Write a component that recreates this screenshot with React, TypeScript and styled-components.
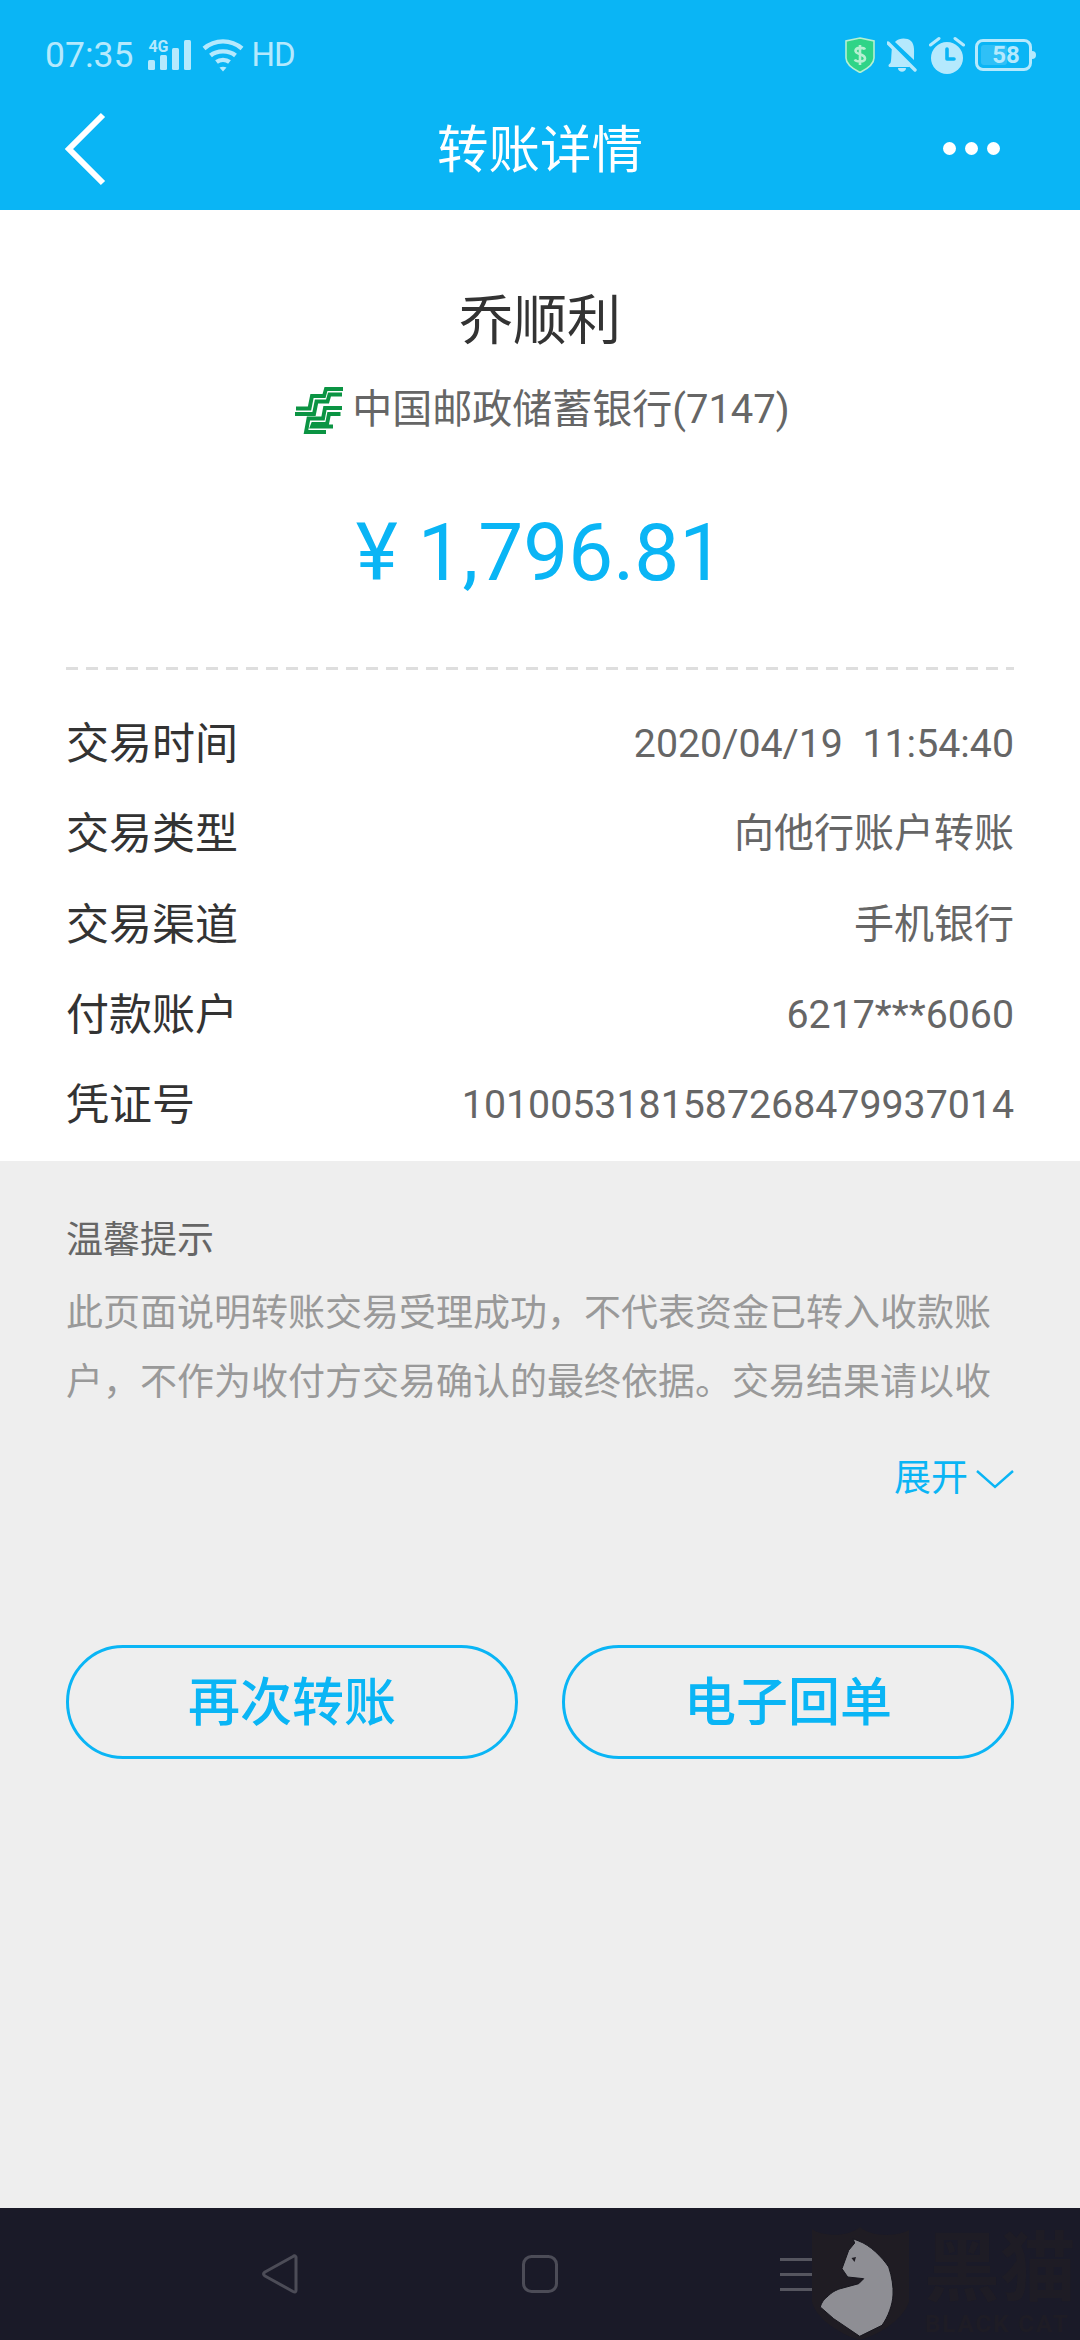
import React from "react";
import styled, { createGlobalStyle } from "styled-components";

const GlobalStyle = createGlobalStyle`
  html, body {
    margin: 0;
    padding: 0;
    background: #eeeeee;
  }
  * {
    box-sizing: border-box;
  }
  svg {
    display: block;
  }
`;

const FONT = `Roboto, "Noto Sans CJK SC", sans-serif`;
const BLUE = "#0ab5f5";
const STATUS = "#b5e9fd";

const Page = styled.div`
  position: relative;
  width: 1080px;
  height: 2340px;
  display: flex;
  flex-direction: column;
  overflow: hidden;
  font-family: ${FONT};
  background: #eeeeee;
`;

const Header = styled.header`
  background: ${BLUE};
  height: 210px;
  flex: none;
`;

const StatusBar = styled.div`
  height: 108px;
  padding: 2px 45px 0 45px;
  display: flex;
  align-items: center;
  justify-content: space-between;
  color: ${STATUS};
`;

const StatusGroup = styled.div`
  display: flex;
  align-items: center;
`;

const RightIcons = styled(StatusGroup)`
  gap: 12px;
`;

const StatusText = styled.span`
  font-size: 35.5px;
  line-height: 40px;
`;

const HdText = styled.span`
  font-size: 33px;
  line-height: 40px;
  letter-spacing: -1px;
  margin-left: 7px;
`;

const Signal = styled.div`
  position: relative;
  width: 44px;
  height: 30px;
  margin: 0 10px 0 15px;
`;

const SignalLabel = styled.span`
  position: absolute;
  left: 0;
  top: 0;
  font-size: 16px;
  line-height: 14px;
  font-weight: 700;
`;

const Battery = styled.div`
  position: relative;
  width: 57px;
  height: 32px;
  margin: 0 3px 0 -2px;
  border: 3px solid ${STATUS};
  border-radius: 8px;
  display: flex;
  align-items: center;
  justify-content: center;
  padding-left: 5px;
  color: ${STATUS};
  font-size: 24px;
  font-weight: 700;

  &::before {
    content: "";
    position: absolute;
    left: 3px;
    top: 3px;
    bottom: 3px;
    width: 26px;
    border-radius: 3px;
    background: rgba(181, 233, 253, 0.22);
  }

  &::after {
    content: "";
    position: absolute;
    right: -7px;
    top: 9px;
    width: 4px;
    height: 8px;
    border-radius: 0 4px 4px 0;
    background: ${STATUS};
  }
`;

const BatteryLevel = styled.span`
  position: relative;
`;

const NavBar = styled.nav`
  height: 102px;
  padding: 0 63px 24px 63px;
  display: grid;
  grid-template-columns: 1fr auto 1fr;
  align-items: center;
`;

const NavTitle = styled.h1`
  margin: 0 0 6px;
  font-size: 51.5px;
  font-weight: 400;
  color: #ffffff;
`;

const Dots = styled.div`
  justify-self: end;
  display: flex;
  gap: 9px;
  margin-right: 17px;
`;

const Dot = styled.span`
  width: 13px;
  height: 13px;
  border-radius: 50%;
  background: #ffffff;
`;

const Card = styled.section`
  background: #ffffff;
  height: 951px;
  flex: none;
  padding: 0 66px;
  display: flex;
  flex-direction: column;
`;

const Payee = styled.div`
  text-align: center;
  font-size: 54px;
  line-height: 70px;
  color: #333333;
  margin-top: 77px;
`;

const Bank = styled.div`
  display: flex;
  align-items: center;
  justify-content: center;
  gap: 9px;
  margin: 25px 0 0 5px;
  font-size: 40px;
  line-height: 56px;
  color: #666666;
`;

const Amount = styled.div`
  text-align: center;
  font-size: 80px;
  line-height: 100px;
  color: ${BLUE};
  margin-top: 65px;
`;

const Divider = styled.div`
  height: 3px;
  margin-top: 64px;
  background: repeating-linear-gradient(to right, #dedede 0 12px, transparent 12px 20px);
`;

const Rows = styled.div`
  padding-top: 29px;
`;

const Row = styled.div`
  height: 90.3px;
  display: flex;
  align-items: center;
  justify-content: space-between;
`;

const RowLabel = styled.span`
  font-size: 43px;
  color: #333333;
  margin-bottom: 8px;
`;

const RowValue = styled.span<{ $cjk?: boolean }>`
  font-size: ${(p) => (p.$cjk ? 40 : 39.3)}px;
  margin-bottom: ${(p) => (p.$cjk ? 8 : 0)}px;
  color: #666666;
  white-space: pre;
`;

const Notice = styled.section`
  padding: 54px 66px 0;
`;

const NoticeTitle = styled.div`
  font-size: 37px;
  line-height: 52px;
  color: #666666;
`;

const NoticeBody = styled.p`
  margin: 12px 0 0;
  font-size: 37px;
  line-height: 69px;
  color: #999999;
`;

const Expand = styled.div`
  margin-top: 37px;
  display: flex;
  align-items: center;
  justify-content: flex-end;
  gap: 8px;
  font-size: 37px;
  line-height: 50px;
  color: ${BLUE};
`;

const Actions = styled.div`
  display: grid;
  grid-template-columns: 1fr 1fr;
  gap: 44px;
  margin-top: 141px;
`;

const ActionButton = styled.button`
  height: 114px;
  padding: 0 0 8px;
  border: 3px solid ${BLUE};
  border-radius: 57px;
  background: transparent;
  color: ${BLUE};
  font-family: ${FONT};
  font-size: 52px;
  font-weight: 500;
`;

const Spacer = styled.div`
  flex: 1;
`;

const BottomBar = styled.div`
  height: 132px;
  flex: none;
  background: #1a1a28;
  display: flex;
  align-items: center;
  padding-left: 260px;
`;

const NavSlot = styled.div<{ $w: number }>`
  width: ${(p) => p.$w}px;
  display: flex;
  align-items: center;
`;

const Watermark = styled.div`
  position: absolute;
  left: 812px;
  bottom: 0;
  width: 268px;
  height: 113px;
`;

const CatSvg = styled.svg`
  position: absolute;
  left: 0;
  top: 0;
`;

const WatermarkText = styled.span`
  position: absolute;
  left: 112px;
  top: 4px;
  font-size: 76px;
  line-height: 76px;
  font-weight: 700;
  white-space: nowrap;
  color: #1e1c25;
`;

const WatermarkSub = styled.span`
  position: absolute;
  left: 113px;
  top: 84px;
  font-size: 24px;
  line-height: 26px;
  font-weight: 700;
  letter-spacing: 2px;
  white-space: nowrap;
  color: #1e1c25;
`;

const SignalIcon = () => (
  <svg width="44" height="30" viewBox="0 0 44 30" fill={STATUS}>
    <rect x="0" y="20" width="7" height="10" rx="1.5" />
    <rect x="12" y="15" width="7" height="15" rx="1.5" />
    <rect x="24" y="8" width="7" height="22" rx="1.5" />
    <rect x="36" y="0" width="7" height="30" rx="1.5" />
  </svg>
);

const WifiIcon = () => (
  <svg width="42" height="34" viewBox="0 0 42 34" fill="none" stroke={STATUS} strokeWidth="4.4">
    <path d="M2 10.5C13 1 29 1 40 10.5" />
    <path d="M8.5 17.5C15 12 27 12 33.5 17.5" />
    <path d="M14.5 24C18 21.2 24 21.2 27.5 24" />
    <path d="M17.5 29.5L21 33.5L24.5 29.5C22.5 28.4 19.5 28.4 17.5 29.5Z" fill={STATUS} stroke="none" />
  </svg>
);

const ShieldIcon = () => (
  <svg width="30" height="36" viewBox="0 0 30 36">
    <path d="M15 1L29 4V21C29 27 22 32 15 35.5C8 32 1 27 1 21V4Z" fill="#2fd487" stroke="#b5f0d2" strokeWidth="1.6" />
    <path d="M20 12.5C19 10.5 11 9.8 10.5 13.5C10 18 20 16.5 20 21.5C20 25.5 11 25 9.8 22.5M15 8V28" fill="none" stroke="#b5f0d2" strokeWidth="2.6" />
  </svg>
);

const BellOffIcon = () => (
  <svg width="30" height="36" viewBox="0 0 30 36" fill={STATUS}>
    <path d="M5 10L23 30H3C1 30 1 27.5 3 26.5C4.5 25.5 4 20 5 10Z" />
    <path d="M9 4C12 1 20 .5 24 4C28 8 27 14 27 23L8 5Z" />
    <path d="M11 31H19C19 36 11 36 11 31Z" />
    <path d="M1 6L28 33" stroke={STATUS} strokeWidth="3.4" strokeLinecap="round" />
  </svg>
);

const AlarmIcon = () => (
  <svg width="36" height="38" viewBox="0 0 36 38">
    <circle cx="18" cy="22" r="16" fill={STATUS} />
    <path d="M1.5 9L10 2.5M34.5 9L26 2.5" stroke={STATUS} strokeWidth="3" strokeLinecap="round" />
    <path d="M18 13V23H25" fill="none" stroke={BLUE} strokeWidth="3.6" strokeLinecap="round" strokeLinejoin="round" />
  </svg>
);

const BackIcon = () => (
  <svg width="44" height="74" viewBox="0 0 44 74" fill="none" stroke="#ffffff" strokeWidth="6">
    <path d="M40 3L6 37L40 71" />
  </svg>
);

// 邮政 logo: parallel zigzag stripes
const PostLogo = () => (
  <svg width="48" height="47" viewBox="0 0 48 47" fill="none" stroke="#0b9443" strokeWidth="3.9">
    <path d="M48 2H31L29 9H17L14.500 21.500H1" />
    <path d="M47 7.500H34.500L32.500 14.500H21.500L19 27H0" />
    <path d="M47 21H30L28 31.500H13.500L11 45H31" />
    <path d="M45.500 27H34L32 37H18L17 39.500H38" />
  </svg>
);

const BackNav = () => (
  <svg width="40" height="40" viewBox="0 0 40 40" fill="none" stroke="#4c4c57" strokeWidth="3" strokeLinejoin="round">
    <path d="M36 3C35 1.500 34 1.500 33 2.500L5 18C3 19.500 3 20.500 5 22L33 37.500C35 38.500 36 38 36 36.500Z" />
  </svg>
);

const HomeNav = () => (
  <svg width="36" height="38" viewBox="0 0 36 38" fill="none" stroke="#4c4c57" strokeWidth="3">
    <rect x="1.5" y="1.5" width="33" height="35" rx="8" />
  </svg>
);

const MenuNav = () => (
  <svg width="38" height="33" viewBox="0 0 38 33" fill="#55555f">
    <rect x="0" y="0" width="38" height="3" />
    <rect x="0" y="15" width="38" height="3" />
    <rect x="0" y="30" width="38" height="3" />
  </svg>
);

const CatMark = () => (
  <CatSvg width="100" height="113" viewBox="0 0 100 113">
    <path d="M0 2C8 9 36 11 48 0C60 11 88 9 97 3V75C92 90 72 106 48 113C24 106 4 90 0 75Z" fill="#1f1c23" />
    <path
      d="M41 11.700L46.700 14C58 18 70 30 76.700 40C80 50 81.500 60 81 68C80.500 78 76 90 70 98.300L47.700 109.300L21.700 91.700L8.300 80C10 74 13 72 15 70C20 65 24 63 28.300 61.700L46.700 56.700L51.700 51.700L35.700 50L30 41.700L36.700 23.300L42.700 16Z"
      fill="#8e8e94"
      stroke="#17161d"
      strokeWidth="1"
    />
    <path d="M39.500 31L44 30L42.500 35Z" fill="#1f1c23" />
  </CatSvg>
);

const rows = [
  { label: "交易时间", value: "2020/04/19  11:54:40" },
  { label: "交易类型", value: "向他行账户转账", cjk: true },
  { label: "交易渠道", value: "手机银行", cjk: true },
  { label: "付款账户", value: "6217***6060" },
  { label: "凭证号", value: "1010053181587268479937014" },
];

const App = () => {
  return (
    <Page>
      <GlobalStyle />
      <Header>
        <StatusBar>
          <StatusGroup>
            <StatusText>07:35</StatusText>
            <Signal>
              <SignalLabel>4G</SignalLabel>
              <SignalIcon />
            </Signal>
            <WifiIcon />
            <HdText>HD</HdText>
          </StatusGroup>
          <RightIcons>
            <ShieldIcon />
            <BellOffIcon />
            <AlarmIcon />
            <Battery>
              <BatteryLevel>58</BatteryLevel>
            </Battery>
          </RightIcons>
        </StatusBar>
        <NavBar>
          <BackIcon />
          <NavTitle>转账详情</NavTitle>
          <Dots>
            <Dot />
            <Dot />
            <Dot />
          </Dots>
        </NavBar>
      </Header>
      <Card>
        <Payee>乔顺利</Payee>
        <Bank>
          <PostLogo />
          中国邮政储蓄银行(7147)
        </Bank>
        <Amount>¥ 1,796.81</Amount>
        <Divider />
        <Rows>
          {rows.map((row) => (
            <Row key={row.label}>
              <RowLabel>{row.label}</RowLabel>
              <RowValue $cjk={row.cjk}>{row.value}</RowValue>
            </Row>
          ))}
        </Rows>
      </Card>
      <Notice>
        <NoticeTitle>温馨提示</NoticeTitle>
        <NoticeBody>
          此页面说明转账交易受理成功，不代表资金已转入收款账户，不作为收付方交易确认的最终依据。交易结果请以收
        </NoticeBody>
        <Expand>
          展开
          <svg width="38" height="20" viewBox="0 0 38 20" fill="none" stroke={BLUE} strokeWidth="2.4">
            <path d="M1 2L19 18L37 2" />
          </svg>
        </Expand>
        <Actions>
          <ActionButton>再次转账</ActionButton>
          <ActionButton>电子回单</ActionButton>
        </Actions>
      </Notice>
      <Spacer />
      <BottomBar>
        <NavSlot $w={262}>
          <BackNav />
        </NavSlot>
        <NavSlot $w={258}>
          <HomeNav />
        </NavSlot>
        <MenuNav />
      </BottomBar>
      <Watermark>
        <CatMark />
        <WatermarkText>黑猫</WatermarkText>
        <WatermarkSub>BLACK CAT</WatermarkSub>
      </Watermark>
    </Page>
  );
};

export default App;
